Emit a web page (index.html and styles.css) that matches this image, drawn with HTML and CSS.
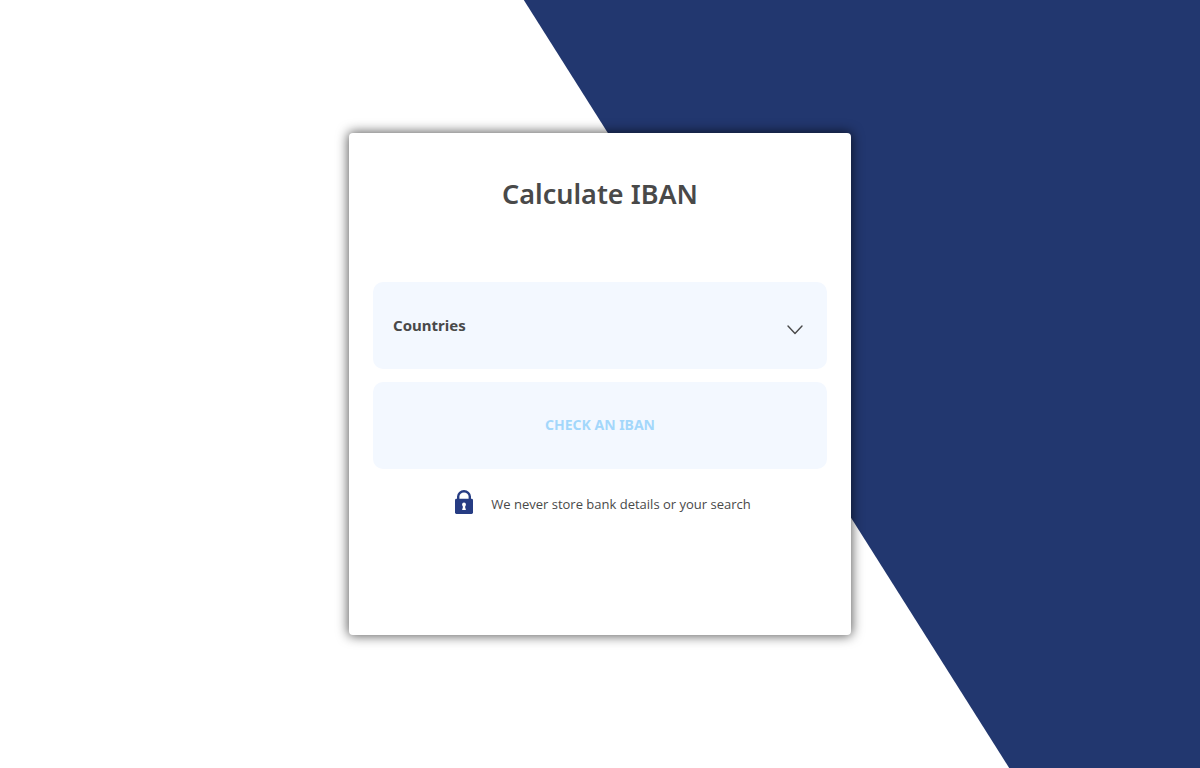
FILE: index.html
```html
<!DOCTYPE html>
<html lang="en">
<head>
<meta charset="utf-8">
<meta name="viewport" content="width=device-width, initial-scale=1">
<title>Calculate IBAN</title>
<link rel="stylesheet" href="styles.css">
</head>
<body>
<main class="page">
  <form class="card">
    <h1 class="title">Calculate IBAN</h1>
    <div class="fields">
      <div class="picker">
        <select class="select" aria-label="Countries">
          <option>Countries</option>
        </select>
        <svg class="chevron" viewBox="0 0 16 10" aria-hidden="true"><path d="M1 1l7 7.500l7-7.500" fill="none" stroke="currentColor" stroke-width="1.400" stroke-linecap="round" stroke-linejoin="round"/></svg>
      </div>
      <button class="submit" type="button">CHECK AN IBAN</button>
    </div>
    <p class="note">
      <svg class="lock" viewBox="0 0 18 24" aria-hidden="true">
        <path d="M3.200 10V6.600a5.800 5.400 0 0 1 11.600 0V10" fill="none" stroke="currentColor" stroke-width="2.400"/>
        <rect y="8.800" width="18" height="15.200" rx="1.400" fill="currentColor"/>
        <circle cx="9" cy="14.500" r="1.900" fill="#fff"/>
        <path d="M7.800 14.500h2.400V18.500h.6V20H7.200v-1.500h.6z" fill="#fff"/>
      </svg>
      <span>We never store bank details or your search</span>
    </p>
  </form>
</main>
</body>
</html>
```
FILE: styles.css
```css
* {
  box-sizing: border-box;
}

body {
  margin: 0;
  background: #fff;
  color: #494949;
  font-family: "Noto Sans", "Open Sans", sans-serif;
}

.page {
  position: relative;
  display: grid;
  place-items: center;
  min-height: 100vh;
}

.page::before {
  content: "";
  position: absolute;
  inset: 0;
  background: #22376f;
  clip-path: polygon(43.650% 0, 100% 0, 100% 100%, 84.100% 100%);
}

.card {
  position: relative;
  width: 100%;
  max-width: 502px;
  min-height: 502px;
  padding: 40px 24px;
  border-radius: 4px;
  background: #fff;
  box-shadow: 0 0 12px 1px rgba(0, 0, 0, 0.65);
}

.title {
  margin: 0 0 68px;
  font-size: 27px;
  font-weight: 600;
  line-height: 41px;
  text-align: center;
}

.fields {
  display: grid;
  gap: 13px;
}

.picker {
  display: grid;
  align-items: center;
}

.select,
.submit {
  width: 100%;
  height: 87px;
  border: 0;
  border-radius: 10px;
  background: #f3f8ff;
  font-family: inherit;
  font-weight: 700;
}

.select {
  grid-area: 1 / 1;
  appearance: none;
  padding: 0 20px 2px;
  color: inherit;
  font-size: 15px;
}

.chevron {
  grid-area: 1 / 1;
  justify-self: end;
  width: 16px;
  height: 10px;
  margin: 8px 24px 0 0;
  pointer-events: none;
}

.submit {
  padding: 0 0 2px;
  color: #a3d7fb;
  font-size: 14px;
}

.note {
  display: flex;
  justify-content: center;
  align-items: center;
  gap: 18px;
  margin: 19px 0 0;
  padding-left: 6px;
  font-family: "Open Sans", "Noto Sans", sans-serif;
  font-size: 13px;
  line-height: 24px;
}

.note span {
  padding-top: 4px;
}

.lock {
  width: 18px;
  height: 24px;
  color: #263c83;
}
```
